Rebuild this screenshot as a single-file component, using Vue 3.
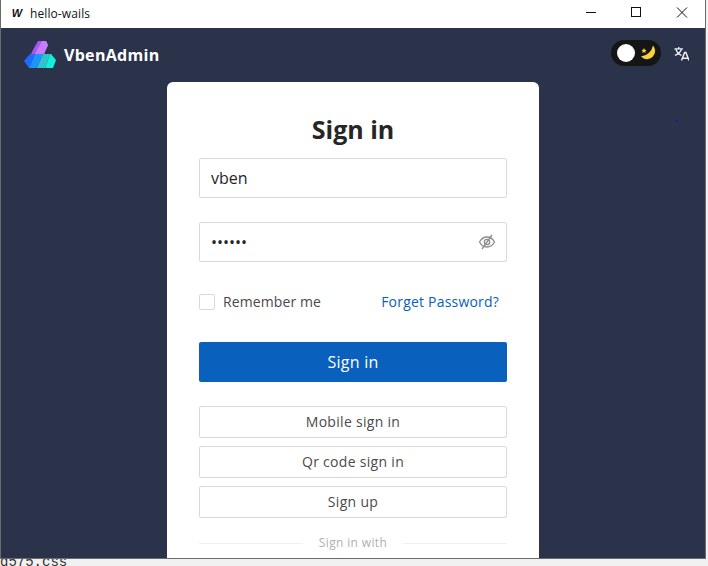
<script setup>
import { ref } from 'vue'

const username = ref('vben')
const password = ref('123456')
const remember = ref(false)
const otherButtons = ['Mobile sign in', 'Qr code sign in', 'Sign up']
</script>

<template>
  <div class="screen">
    <div class="window">
      <div class="titlebar">
        <span class="app-icon">W</span>
        <span class="app-title">hello-wails</span>
        <div class="controls">
          <svg width="46" height="28" viewBox="0 0 46 28"><path d="M19 12.500h10" stroke="#111" fill="none" /></svg>
          <svg width="46" height="28" viewBox="0 0 46 28"><rect x="18.500" y="7.500" width="9" height="9" stroke="#111" fill="none" /></svg>
          <svg width="46" height="28" viewBox="0 0 46 28"><path d="M18 7.500l10 10M28 7.500l-10 10" stroke="#111" fill="none" /></svg>
        </div>
      </div>

      <div class="page">
        <span class="speck"></span>
        <header class="top">
          <div class="brand">
            <svg class="logo" width="32" height="30" viewBox="0 0 32 30">
              <path d="M14 1h8l2 4-4 9H7l3-6z" fill="#a855f7" />
              <path d="M18 1h4l2 4-4 9h-9z" fill="#c77dff" />
              <path d="M6 14h5L5 28 0 21z" fill="#1f6bff" />
              <path d="M11 14h8l-6 14H5z" fill="#1d95ff" />
              <path d="M19 14h7l-5 14h-8z" fill="#33c3d0" />
              <path d="M26 14h1l5 6-3 8h-8z" fill="#12f0d8" />
            </svg>
            <span class="brand-name">VbenAdmin</span>
          </div>
          <div class="tools">
            <div class="theme-switch">
              <span class="knob"></span>
              <svg width="16" height="16" viewBox="0 0 16 16">
                <path d="M13 0.500A7.800 7.800 0 1 1 1 11.500 14 14 0 0 0 13 0.500z" fill="#fbd13d" />
                <path d="M4 3l.8 1.700 1.800.2-1.300 1.200.4 1.900L4 7.100 2.300 8l.4-1.900L1.400 4.900l1.800-.2z" fill="#fbd13d" />
              </svg>
            </div>
            <svg class="lang" width="15" height="15" viewBox="0 0 16 16">
              <path d="M0.500 3h9M5 1v2M2 3c.6 3 3 5.500 6 7M8 3c-.6 3-3.500 5.500-7 7" stroke="#eef0f4" stroke-width="1.400" fill="none" />
              <path d="M8 15.500 11.300 7h1.400l3.300 8.500M9.300 13h5.400" stroke="#eef0f4" stroke-width="1.600" fill="none" />
            </svg>
          </div>
        </header>

        <main class="card">
          <h2 class="card-title">Sign in</h2>
          <div class="field">
            <input v-model="username" class="text-input" type="text" />
          </div>
          <div class="field">
            <input v-model="password" class="text-input" type="password" />
            <svg class="eye" width="18" height="18" viewBox="0 0 18 18">
              <path d="M1.500 9C3.300 5.700 5.900 4 9 4s5.700 1.700 7.500 5c-1.800 3.300-4.400 5-7.500 5S3.300 12.300 1.500 9z" stroke="#8c8c8c" stroke-width="1.300" fill="none" />
              <circle cx="9" cy="9" r="2.700" stroke="#8c8c8c" stroke-width="1.300" fill="none" />
              <path d="M14 2 4 16" stroke="#8c8c8c" stroke-width="1.300" />
            </svg>
          </div>
          <div class="options">
            <label class="remember">
              <input v-model="remember" class="check" type="checkbox" />
              <span class="option-text">Remember me</span>
            </label>
            <a class="forget option-text" href="#">Forget Password?</a>
          </div>
          <button class="primary" type="button">Sign in</button>
          <div class="others">
            <button v-for="label in otherButtons" :key="label" class="secondary" type="button">{{ label }}</button>
          </div>
          <div class="divider">
            <span class="line"></span>
            <span class="divider-text">Sign in with</span>
            <span class="line"></span>
          </div>
        </main>
      </div>
    </div>
    <div class="behind">d575.css</div>
  </div>
</template>

<style>
html, body {
  margin: 0;
  background: #f1f1f1;
}
</style>

<style scoped>
.screen {
  width: 708px;
  height: 566px;
  overflow: hidden;
  font-family: "Open Sans", "Noto Sans", sans-serif;
}
.window {
  box-sizing: border-box;
  width: 706px;
  height: 559px;
  border: 1px solid #6b6b6b;
  border-top: none;
  display: flex;
  flex-direction: column;
  overflow: hidden;
}
.titlebar {
  height: 28px;
  flex: none;
  background: #fff;
  display: flex;
  align-items: center;
  color: #111;
  font-size: 12px;
}
.app-icon {
  width: 12px;
  margin-left: 10px;
  font-family: "Liberation Sans", sans-serif;
  font-weight: 700;
  font-style: italic;
  font-size: 11px;
  text-align: center;
  padding-bottom: 2px;
}
.app-title {
  margin-left: 7px;
  padding-bottom: 2px;
  letter-spacing: 0.1px;
}
.controls {
  margin-left: auto;
  display: flex;
  height: 28px;
}
.page {
  position: relative;
  flex: 1;
  background: #2a3349;
  display: flex;
  flex-direction: column;
  align-items: center;
  min-height: 0;
}
.speck {
  position: absolute;
  left: 675px;
  top: 92px;
  width: 2px;
  height: 2px;
  background: #1414c8;
}
.top {
  box-sizing: border-box;
  width: 100%;
  height: 54px;
  flex: none;
  padding: 0 16px 0 23px;
  display: flex;
  align-items: center;
  justify-content: space-between;
}
.brand {
  display: flex;
  align-items: center;
  gap: 8px;
}
.brand-name {
  color: #fff;
  font-size: 16px;
  font-weight: 700;
  letter-spacing: 0.3px;
}
.tools {
  display: flex;
  align-items: center;
  gap: 13px;
  margin-bottom: 4px;
}
.theme-switch {
  box-sizing: border-box;
  width: 50px;
  height: 26px;
  border-radius: 13px;
  background: #151515;
  padding: 0 5px 0 6px;
  display: flex;
  align-items: center;
  justify-content: space-between;
}
.knob {
  width: 18px;
  height: 18px;
  border-radius: 50%;
  background: #fff;
}
.card {
  box-sizing: border-box;
  width: 372px;
  flex: 1;
  background: #fff;
  border-radius: 6px 6px 0 0;
  padding: 27px 32px 0;
  overflow: hidden;
}
.card-title {
  margin: 0 0 7px;
  height: 42px;
  line-height: 41px;
  text-align: center;
  font-size: 25px;
  font-weight: 700;
  color: #262626;
}
.field {
  position: relative;
  margin-bottom: 24px;
}
.text-input {
  box-sizing: border-box;
  display: block;
  width: 100%;
  height: 40px;
  padding: 0 11px;
  border: 1px solid #d9d9d9;
  border-radius: 2px;
  outline: none;
  font-family: inherit;
  font-size: 16px;
  color: #262626;
}
.eye {
  position: absolute;
  right: 11px;
  top: 11px;
}
.options {
  height: 32px;
  margin: 0 0 24px;
  padding: 0 8px 0 0;
  display: flex;
  align-items: center;
  justify-content: space-between;
  font-size: 14px;
}
.option-text {
  padding-bottom: 2px;
}
.remember {
  display: flex;
  align-items: center;
  gap: 8px;
  color: #4a4a4a;
  letter-spacing: 0.1px;
}
.check {
  appearance: none;
  box-sizing: border-box;
  width: 16px;
  height: 16px;
  margin: 0;
  border: 1px solid #d9d9d9;
  border-radius: 2px;
  background: #fff;
}
.forget {
  color: #0960bd;
  text-decoration: none;
  letter-spacing: 0.2px;
}
.primary {
  display: block;
  width: 100%;
  height: 40px;
  border: none;
  border-radius: 2px;
  background: #0960bd;
  color: #fff;
  font-family: inherit;
  font-size: 16px;
  letter-spacing: 0.25px;
}
.others {
  margin-top: 24px;
  display: flex;
  flex-direction: column;
  gap: 8px;
}
.secondary {
  height: 32px;
  padding: 0 0 2px;
  border: 1px solid #d9d9d9;
  border-radius: 2px;
  background: #fff;
  color: #4a4a4a;
  font-family: inherit;
  font-size: 14px;
  letter-spacing: 0.3px;
}
.divider {
  margin-top: 15px;
  display: flex;
  align-items: center;
  gap: 16px;
}
.line {
  flex: 1;
  height: 1px;
  background: #f0f0f0;
}
.divider-text {
  color: #b0b0b0;
  font-size: 12px;
  line-height: 20px;
  letter-spacing: 0.35px;
}
.behind {
  height: 7px;
  overflow: hidden;
  background: #f1f1f1;
  font-family: "Liberation Mono", monospace;
  font-size: 14px;
  line-height: 7px;
  color: #333;
}
</style>
